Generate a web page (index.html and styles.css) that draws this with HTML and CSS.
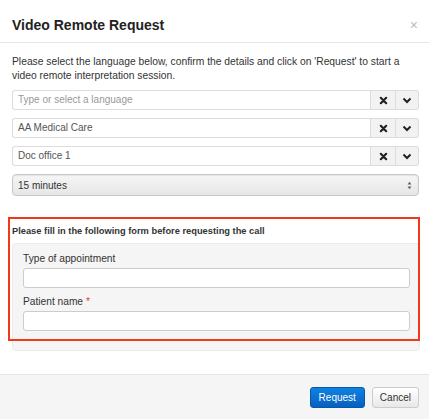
FILE: index.html
```html
<!DOCTYPE html>
<html>
<head>
<meta charset="utf-8">
<link rel="stylesheet" href="styles.css">
</head>
<body>
<div class="modal">
  <div class="modal-header">
    <h4 class="title">Video Remote Request</h4>
    <span class="close">×</span>
  </div>
  <div class="modal-body">
    <p class="intro">Please select the language below, confirm the details and click on 'Request' to start a video remote interpretation session.</p>
    <div class="combo">
      <div class="combo-input placeholder">Type or select a language</div>
      <div class="combo-btn clear"><svg width="9" height="9" viewBox="0 0 10 10"><path d="M2 2L8 8M8 2L2 8" stroke="#222" stroke-width="2.4" stroke-linecap="round"/></svg></div>
      <div class="combo-btn toggle"><svg width="10" height="7" viewBox="0 0 10 7"><path d="M1.5 1.5L5 5L8.5 1.5" fill="none" stroke="#222" stroke-width="2"/></svg></div>
    </div>
    <div class="combo">
      <div class="combo-input">AA Medical Care</div>
      <div class="combo-btn clear"><svg width="9" height="9" viewBox="0 0 10 10"><path d="M2 2L8 8M8 2L2 8" stroke="#222" stroke-width="2.4" stroke-linecap="round"/></svg></div>
      <div class="combo-btn toggle"><svg width="10" height="7" viewBox="0 0 10 7"><path d="M1.5 1.5L5 5L8.5 1.5" fill="none" stroke="#222" stroke-width="2"/></svg></div>
    </div>
    <div class="combo">
      <div class="combo-input">Doc office 1</div>
      <div class="combo-btn clear"><svg width="9" height="9" viewBox="0 0 10 10"><path d="M2 2L8 8M8 2L2 8" stroke="#222" stroke-width="2.4" stroke-linecap="round"/></svg></div>
      <div class="combo-btn toggle"><svg width="10" height="7" viewBox="0 0 10 7"><path d="M1.5 1.5L5 5L8.5 1.5" fill="none" stroke="#222" stroke-width="2"/></svg></div>
    </div>
    <div class="select">
      <span>15 minutes</span>
      <svg width="5" height="9" viewBox="0 0 5 9"><path d="M0.5 3.5L2.5 0.8L4.5 3.5Z M0.5 5.5L2.5 8.2L4.5 5.5Z" fill="#666"/></svg>
    </div>
    <div class="extra">
      <div class="extra-title">Please fill in the following form before requesting the call</div>
      <div class="well">
        <div class="label">Type of appointment</div>
        <div class="field"></div>
        <div class="label second">Patient name <span class="req">*</span></div>
        <div class="field"></div>
      </div>
      <div class="highlight"></div>
    </div>
  </div>
  <div class="modal-footer">
    <button class="btn primary">Request</button>
    <button class="btn">Cancel</button>
  </div>
</div>
</body>
</html>
```

FILE: styles.css
```css
html, body {
  margin: 0;
  padding: 0;
  background: #fff;
}
body {
  font-family: "Liberation Sans", Arial, sans-serif;
  color: #333;
  width: 429px;
  height: 419px;
  overflow: hidden;
}
.modal {
  display: flex;
  flex-direction: column;
  height: 419px;
}
.modal-header {
  display: flex;
  justify-content: space-between;
  align-items: center;
  padding: 17px 11px 8px 12px;
  border-bottom: 1px solid #e5e5e5;
  height: 17px;
}
.title {
  margin: 0;
  font-size: 14px;
  line-height: 17px;
  font-weight: bold;
  color: #222;
}
.close {
  font-size: 14px;
  color: #bbb;
  line-height: 17px;
}
.modal-body {
  padding: 0 10px 0 12px;
  flex: 1;
}
.intro {
  margin: 12px 0 7px;
  max-width: 396px;
  font-size: 10.3px;
  line-height: 14px;
  color: #333;
}
.combo {
  display: flex;
  height: 20px;
  margin-bottom: 8px;
}
.combo-input {
  flex: 1;
  border: 1px solid #ddd;
  border-right: none;
  border-radius: 3px 0 0 3px;
  font-size: 10px;
  line-height: 18px;
  padding: 0 5px;
  color: #555;
  background: #fff;
}
.combo-input.placeholder {
  color: #999;
}
.combo-btn {
  display: flex;
  align-items: center;
  justify-content: center;
  background: #f2f2f2;
  border: 1px solid #ddd;
}
.combo-btn.clear {
  width: 24px;
}
.combo-btn.toggle {
  width: 22px;
  border-left: none;
  border-radius: 0 3px 3px 0;
}
.select {
  display: flex;
  justify-content: space-between;
  align-items: center;
  height: 20px;
  border: 1px solid #c8c8c8;
  border-radius: 4px;
  background: linear-gradient(#f6f6f6, #e6e6e6);
  box-shadow: inset 0 1px 1px rgba(0,0,0,0.08);
  padding: 0 6px 0 5px;
  font-size: 10px;
  color: #333;
}
.extra {
  position: relative;
  margin-top: 21px;
}
.extra-title {
  padding-top: 8px;
  font-size: 9.3px;
  line-height: 12px;
  font-weight: bold;
  color: #333;
}
.well {
  margin-top: 6px;
  margin-right: -1px;
  background: #f5f5f5;
  border: 1px solid #ebebeb;
  border-radius: 4px;
  padding: 8px 9px 19px 10px;
}
.label {
  font-size: 10.2px;
  line-height: 13px;
  color: #333;
}
.label.second {
  margin-top: 7px;
}
.req {
  color: #e03a2a;
}
.field {
  margin-top: 3px;
  height: 18px;
  background: #fff;
  border: 1px solid #ccc;
  border-radius: 3px;
}
.highlight {
  position: absolute;
  left: -4px;
  top: 0;
  width: 408px;
  height: 120px;
  border: 2px solid #f0391c;
}
.modal-footer {
  display: flex;
  justify-content: flex-end;
  gap: 7px;
  padding: 12px 10px 0 0;
  height: 32px;
  border-top: 1px solid #e5e5e5;
  background: #f5f5f5;
}
.btn {
  height: 21px;
  padding: 0 7px;
  font-family: "Liberation Sans", Arial, sans-serif;
  font-size: 10px;
  border-radius: 3px;
  border: 1px solid #ccc;
  background: linear-gradient(#ffffff, #e8e8e8);
  color: #333;
}
.btn.primary {
  background: linear-gradient(#0f82e0, #0660c0);
  border-color: #0558a8;
  color: #fff;
  padding: 0 8px;
}
```
